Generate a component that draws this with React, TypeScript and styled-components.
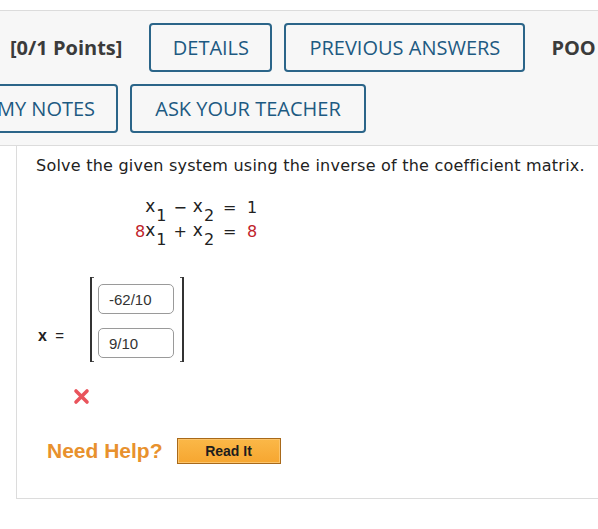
import React from 'react';
import styled, { createGlobalStyle } from 'styled-components';

const GlobalStyle = createGlobalStyle`
  html, body {
    margin: 0;
    padding: 0;
    background: #ffffff;
  }
  body {
    font-family: 'Open Sans', 'DejaVu Sans', sans-serif;
    overflow: hidden;
  }
`;

const Page = styled.div`
  width: 598px;
  height: 529px;
  padding-top: 10px;
  box-sizing: border-box;
  overflow: hidden;
`;

const Header = styled.div`
  background: #f7f7f7;
  border-top: 1px solid #dcdcdc;
  border-bottom: 1px solid #dcdcdc;
  padding: 12px 0 12px 0;
  display: flex;
  flex-direction: column;
  gap: 12px;
  overflow: hidden;
`;

const Row = styled.div<{ $offset: number }>`
  display: flex;
  align-items: center;
  gap: 12px;
  margin-left: ${p => p.$offset}px;
  white-space: nowrap;
`;

const Points = styled.span`
  font-family: 'Open Sans', sans-serif;
  font-size: 20px;
  font-weight: 700;
  color: #3b3b3b;
`;

const OutlineButton = styled.button<{ $w: number }>`
  box-sizing: border-box;
  width: ${p => p.$w}px;
  height: 49px;
  flex-shrink: 0;
  border: 2px solid #2b6589;
  border-radius: 4px;
  background: #f7f7f7;
  color: #1d5a82;
  font-family: 'Open Sans', sans-serif;
  font-size: 20px;
  font-weight: 500;
  text-transform: uppercase;
  padding: 0;
  cursor: pointer;
`;

const Content = styled.div`
  margin-left: 16px;
  height: 353px;
  border-left: 1px solid #dcdcdc;
  border-bottom: 1px solid #dcdcdc;
  padding: 10px 0 0 19px;
  box-sizing: border-box;
  font-family: Verdana, 'DejaVu Sans', sans-serif;
  color: #222222;
`;

const Prompt = styled.p`
  margin: 0;
  font-size: 16px;
  line-height: 20px;
  letter-spacing: 0.23px;
  white-space: nowrap;
`;

const Equations = styled.div`
  display: grid;
  grid-template-columns: auto 10px auto;
  grid-auto-rows: 24px;
  column-gap: 9px;
  justify-content: start;
  margin: 20px 0 0 99px;
  font-size: 16px;
  line-height: 24px;
`;

const Lhs = styled.span`
  text-align: right;
  white-space: nowrap;
`;

const Rhs = styled.span<{ $red?: boolean }>`
  color: ${p => (p.$red ? '#c0232a' : '#222222')};
  padding-left: 5px;
`;

const Eq = styled.span`
  text-align: center;
`;

const Coef = styled.span`
  color: #c0232a;
`;

const Var = styled.span`
  font-size: 17px;
  line-height: 1;
  vertical-align: 1px;
`;

const Sub = styled.sub`
  font-size: 16px;
  vertical-align: -8px;
  line-height: 0;
  margin-left: 1px;
`;

const Op = styled.span`
  margin: 0 6px 0 7px;
`;

const MatrixRow = styled.div`
  display: flex;
  align-items: flex-start;
  margin-top: 33px;
`;

const VarLabel = styled.span`
  font-family: Arial, 'Liberation Sans', sans-serif;
  font-size: 15px;
  width: 52px;
  padding: 50px 0 0 2px;
  color: #222;
  b {
    font-size: 16px;
  }
`;

const Bracket = styled.div<{ $side: 'left' | 'right' }>`
  position: relative;
  width: 6px;
  height: 85px;
  border-${p => p.$side}: 2px solid #333;
  &::before,
  &::after {
    content: '';
    position: absolute;
    ${p => p.$side}: 0;
    width: 2px;
    height: 1px;
    background: #555;
  }
  &::before { top: 0; }
  &::after { bottom: 0; }
`;

const Cells = styled.div`
  display: flex;
  flex-direction: column;
  gap: 14px;
  margin: 7px 2px 0 0;
`;

const Cell = styled.input`
  box-sizing: border-box;
  width: 76px;
  height: 30px;
  border: 1px solid #9a9a9a;
  border-radius: 5px;
  padding: 0 10px;
  font-family: Arial, 'Liberation Sans', sans-serif;
  font-size: 15px;
  color: #333;
  background: #fff;
  outline: none;
`;

const Mark = styled.div`
  margin: 26px 0 0 37px;
  height: 17px;
`;

const HelpRow = styled.div`
  display: flex;
  align-items: center;
  gap: 14px;
  margin: 33px 0 0 11px;
`;

const NeedHelp = styled.span`
  font-family: Arial, 'Liberation Sans', sans-serif;
  font-size: 21px;
  font-weight: 700;
  color: #e8912d;
`;

const ReadIt = styled.button`
  box-sizing: border-box;
  width: 104px;
  height: 26px;
  border: 1px solid #a8691a;
  background: linear-gradient(#fbb848, #f6a630);
  box-shadow: inset 0 0 0 1px #fcc46a;
  font-family: Arial, 'Liberation Sans', sans-serif;
  font-size: 14px;
  font-weight: 700;
  color: #1d1d1d;
  padding: 0;
  cursor: pointer;
`;

const CrossIcon = () => (
  <svg width="17" height="17" viewBox="0 0 17 17">
    <path d="M3 3 L14 14 M14 3 L3 14" stroke="#e9545c" strokeWidth="3.6" strokeLinecap="round" />
  </svg>
);

export default function App() {
  return (
    <>
      <GlobalStyle />
      <Page>
        <Header>
          <Row $offset={10}>
            <Points>[0/1 Points]</Points>
            <OutlineButton $w={123} style={{ marginLeft: 15 }}>Details</OutlineButton>
            <OutlineButton $w={241}>Previous Answers</OutlineButton>
            <Points style={{ marginLeft: 14 }}>POO</Points>
          </Row>
          <Row $offset={-26}>
            <OutlineButton $w={144}>My Notes</OutlineButton>
            <OutlineButton $w={236}>Ask Your Teacher</OutlineButton>
          </Row>
        </Header>
        <Content>
          <Prompt>Solve the given system using the inverse of the coefficient matrix.</Prompt>
          <Equations>
            <Lhs>
              <Var>x</Var><Sub>1</Sub>
              <Op>−</Op><Var>x</Var><Sub>2</Sub>
            </Lhs>
            <Eq>=</Eq>
            <Rhs>1</Rhs>
            <Lhs>
              <Coef>8</Coef><Var>x</Var><Sub>1</Sub>
              <Op>+</Op><Var>x</Var><Sub>2</Sub>
            </Lhs>
            <Eq>=</Eq>
            <Rhs $red>8</Rhs>
          </Equations>
          <MatrixRow>
            <VarLabel>
              <b>x</b> &nbsp;=
            </VarLabel>
            <Bracket $side="left" />
            <Cells>
              <Cell defaultValue="-62/10" />
              <Cell defaultValue="9/10" />
            </Cells>
            <Bracket $side="right" />
          </MatrixRow>
          <Mark>
            <CrossIcon />
          </Mark>
          <HelpRow>
            <NeedHelp>Need Help?</NeedHelp>
            <ReadIt>Read It</ReadIt>
          </HelpRow>
        </Content>
      </Page>
    </>
  );
}
